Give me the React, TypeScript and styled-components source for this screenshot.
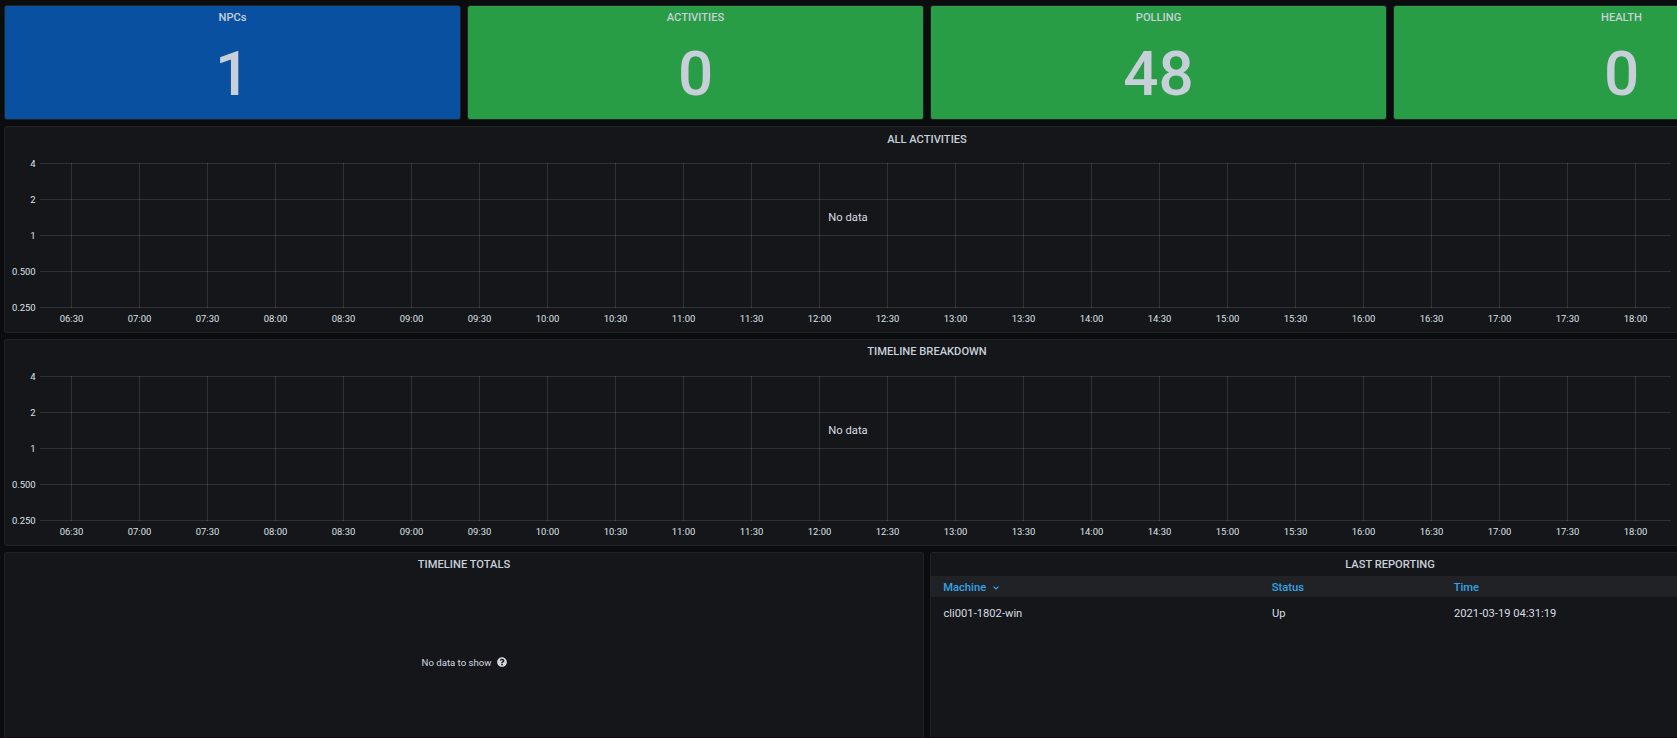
import React from 'react';
import styled, { createGlobalStyle } from 'styled-components';
import { FaQuestionCircle } from 'react-icons/fa';

const GlobalStyle = createGlobalStyle`
  * { box-sizing: border-box; }
  html, body { margin: 0; background: #0b0c0e; overflow: hidden; }
  body { font-family: Roboto, "Liberation Sans", sans-serif; font-size: 11.2px; color: #c7d0d9; }
`;

const Page = styled.main`
  width: 100vw;
  height: 100vh;
  overflow: hidden;
  padding: 5px 0 0 4px;
  border-bottom: 1px solid #12080f;
`;

const Dashboard = styled.div`
  width: 1846px;
  display: flex;
  flex-direction: column;
  gap: 6px;
`;

const StatRow = styled.section`
  display: grid;
  grid-template-columns: repeat(4, 457px);
  gap: 6px;
`;

const BottomRow = styled.section`
  display: grid;
  grid-template-columns: repeat(2, 920px);
  gap: 6px;
`;

const Panel = styled.article<{ $height: number; $fill?: string }>`
  height: ${p => p.$height}px;
  display: flex;
  flex-direction: column;
  background: ${p => p.$fill ?? '#141619'};
  border: 1px solid #202226;
  border-radius: 3px;
  overflow: hidden;
`;

const PanelTitle = styled.h2<{ $drop?: number }>`
  margin: 0;
  height: 22px;
  padding-top: ${p => p.$drop ?? 1}px;
  flex: none;
  font-size: 11.15px;
  font-weight: 500;
  line-height: 22px;
  text-align: center;
  white-space: nowrap;
`;

const StatValue = styled.div`
  font-size: 62px;
  font-weight: 500;
  line-height: 91px;
  text-align: center;
`;

const ChartSvg = styled.svg`
  display: block;
  flex: none;
`;

const GridLine = styled.rect`
  fill: rgba(200, 205, 215, 0.15);
`;

const AxisLabel = styled.text`
  fill: #dde1e6;
  font-size: 9.45px;
`;

const ChartMessage = styled.text`
  fill: #d8dde3;
  font-size: 11.2px;
`;

const EmptyState = styled.div`
  flex: 1;
  display: flex;
  align-items: center;
  justify-content: center;
  gap: 6px;
  padding: 0 0 9px 1px;
  color: #d3d9e0;
  font-size: 9.6px;

  svg { width: 10px; height: 10px; }
`;

const TableRow = styled.div<{ $header?: boolean }>`
  display: grid;
  grid-template-columns: 328.5px 182px 1fr;
  flex: none;
  padding-left: ${p => (p.$header ? 12.2 : 12.5)}px;
  height: ${p => (p.$header ? 21 : 32)}px;
  line-height: ${p => (p.$header ? 24 : 34)}px;
  margin-top: ${p => (p.$header ? 1 : 0)}px;
  background: ${p => (p.$header ? '#202226' : 'transparent')};
  color: ${p => (p.$header ? '#33a2e5' : '#d8dde3')};
  font-weight: ${p => (p.$header ? 500 : 400)};
`;

const SortCell = styled.span`
  display: flex;
  align-items: center;
  gap: 6.5px;
`;

const STATS = [
  { title: 'NPCs', value: '1', fill: '#0a50a1' },
  { title: 'ACTIVITIES', value: '0', fill: '#299c46' },
  { title: 'POLLING', value: '48', fill: '#299c46' },
  { title: 'HEALTH', value: '0', fill: '#299c46' },
];

const Y_TICKS = ['4', '2', '1', '0.500', '0.250'];

const X_TICKS = Array.from({ length: 24 }, (_, i) => {
  const minutes = 390 + i * 30;
  return `${String(Math.floor(minutes / 60)).padStart(2, '0')}:${minutes % 60 ? '30' : '00'}`;
});

function EmptyChart() {
  return (
    <ChartSvg width={1680} height={182}>
      {Y_TICKS.map((label, i) => (
        <g key={label}>
          <GridLine x={35} y={14 + i * 36} width={1631} height={1} />
          <AxisLabel x={30.6} y={18 + i * 36} textAnchor="end">{label}</AxisLabel>
        </g>
      ))}
      {X_TICKS.map((label, i) => (
        <g key={label}>
          <GridLine x={66 + i * 68} y={14} width={1} height={145} />
          <AxisLabel x={66.5 + i * 68} y={173} textAnchor="middle">{label}</AxisLabel>
        </g>
      ))}
      <ChartMessage x={843} y={72} textAnchor="middle">No data</ChartMessage>
    </ChartSvg>
  );
}

export default function App() {
  return (
    <>
      <GlobalStyle />
      <Page>
        <Dashboard>
          <StatRow>
            {STATS.map(stat => (
              <Panel key={stat.title} $height={115} $fill={stat.fill}>
                <PanelTitle>{stat.title}</PanelTitle>
                <StatValue>{stat.value}</StatValue>
              </Panel>
            ))}
          </StatRow>
          <Panel $height={207}>
            <PanelTitle $drop={2}>ALL ACTIVITIES</PanelTitle>
            <EmptyChart />
          </Panel>
          <Panel $height={207}>
            <PanelTitle>TIMELINE BREAKDOWN</PanelTitle>
            <EmptyChart />
          </Panel>
          <BottomRow>
            <Panel $height={207}>
              <PanelTitle>TIMELINE TOTALS</PanelTitle>
              <EmptyState>
                No data to show <FaQuestionCircle />
              </EmptyState>
            </Panel>
            <Panel $height={207}>
              <PanelTitle>LAST REPORTING</PanelTitle>
              <TableRow $header>
                <SortCell>
                  Machine
                  <svg width="6" height="4" viewBox="0 0 6 4" fill="none" stroke="currentColor" strokeWidth="1.2">
                    <path d="M0.5 0.6 3 3 5.5 0.6" />
                  </svg>
                </SortCell>
                <span>Status</span>
                <span>Time</span>
              </TableRow>
              <TableRow>
                <span>cli001-1802-win</span>
                <span>Up</span>
                <span>2021-03-19 04:31:19</span>
              </TableRow>
            </Panel>
          </BottomRow>
        </Dashboard>
      </Page>
    </>
  );
}
